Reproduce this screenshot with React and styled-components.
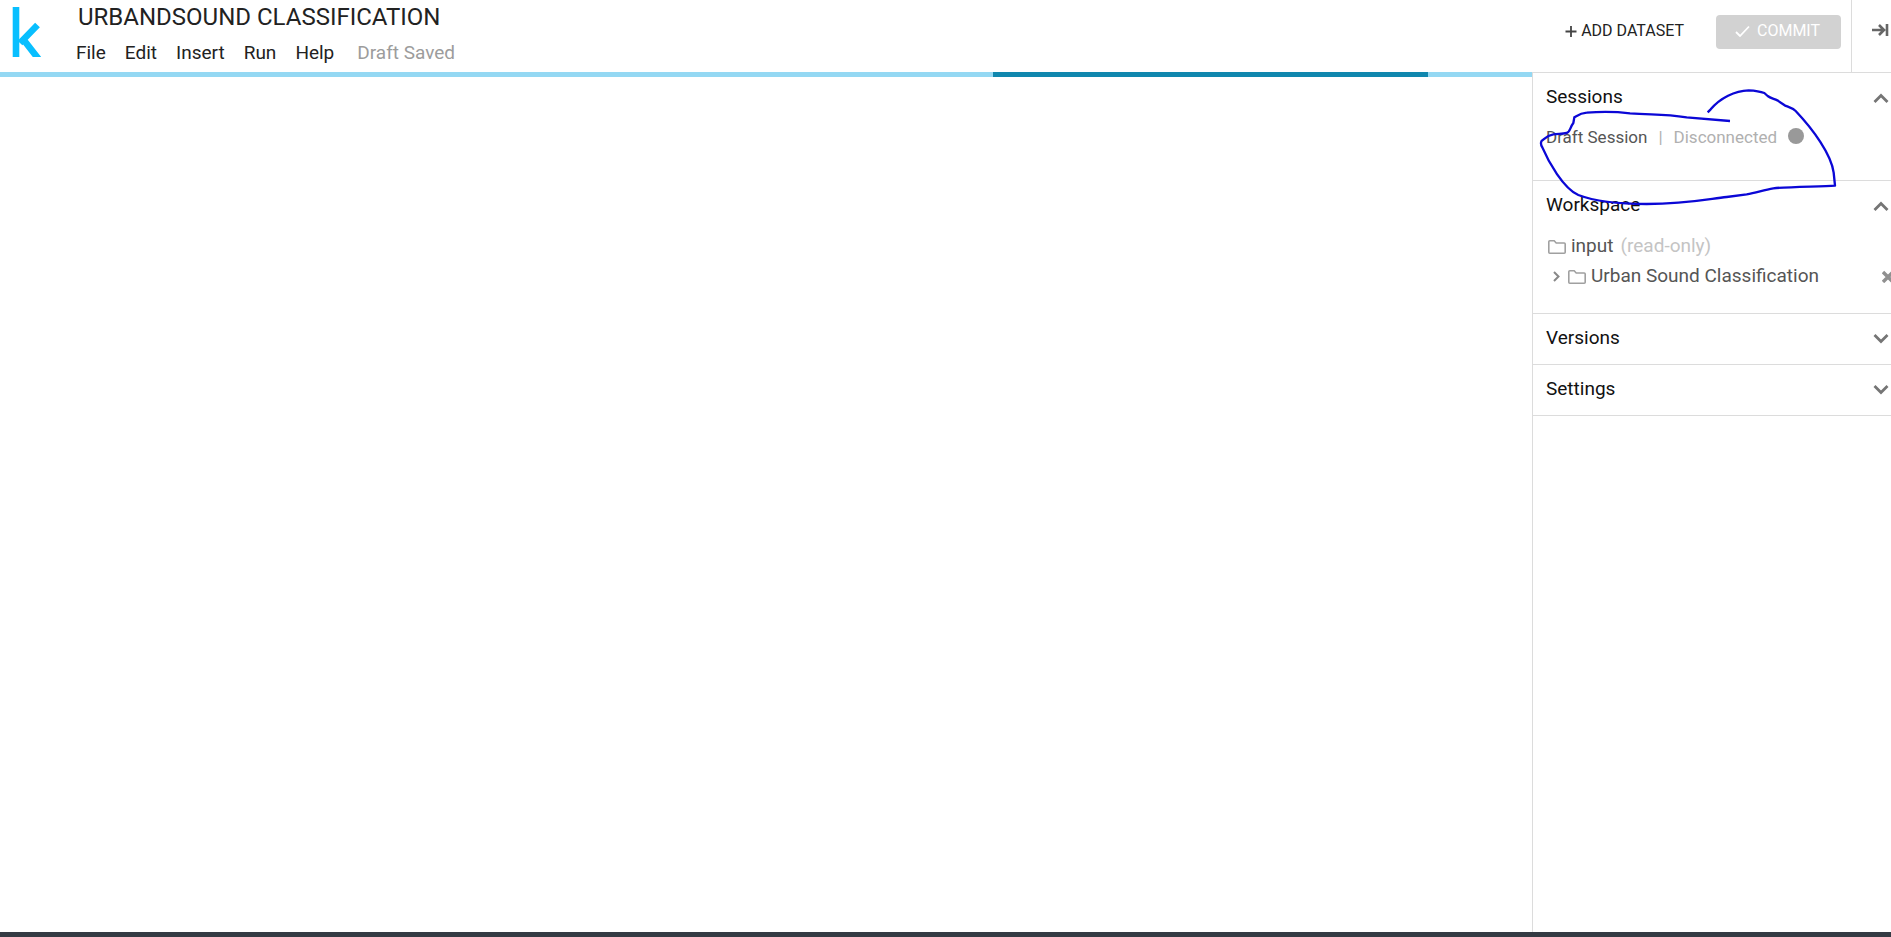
import React from "react";
import styled, { createGlobalStyle } from "styled-components";

const GlobalStyle = createGlobalStyle`
  * {
    box-sizing: border-box;
  }
  body {
    margin: 0;
    background: #fff;
    color: #222;
    font-family: Roboto, "Liberation Sans", Arial, sans-serif;
    font-size: 19px;
    line-height: 24px;
  }
  button {
    margin: 0;
    padding: 0;
    border: 0;
    background: none;
    color: inherit;
    font: inherit;
    text-align: left;
    cursor: pointer;
  }
  h1, h2, ul {
    margin: 0;
    padding: 0;
    font: inherit;
    list-style: none;
  }
`;
const Page = styled.div`
  display: flex;
  flex-direction: column;
  min-height: 100vh;
  border-bottom: 5px solid #343a43;
  overflow: hidden;
`;
const Header = styled.header`
  display: flex;
  height: 72px;
`;
const LogoLink = styled.a`
  width: 76px;
  padding: 7px 0 0 12px;
`;
const TitleWrapper = styled.div`
  flex: 1;
`;
const Title = styled.h1`
  padding: 3px 2px 0;
  font-size: 24px;
  line-height: 28px;
`;
const Menu = styled.nav`
  display: flex;
  gap: 19px;
  padding-top: 10px;
`;
const DraftStatus = styled.span`
  margin-left: 4px;
  color: #9c9c9c;
`;
const Actions = styled.div`
  display: flex;
  align-items: flex-start;
  gap: 32px;
  padding: 15px 10px 0 0;
`;
const AddButton = styled.button`
  display: flex;
  align-items: center;
  gap: 4px;
  height: 32px;
  font-size: 16px;
`;
const CommitButton = styled.button`
  display: flex;
  align-items: center;
  justify-content: center;
  gap: 7px;
  width: 125px;
  height: 34px;
  padding: 0 2px 2px 0;
  border-radius: 4px;
  background: #d2d2d2;
  color: #fff;
  font-size: 16px;
`;
const CollapseButton = styled.button`
  width: 40px;
  padding: 0 0 10px 20px;
  border-left: 1px solid #dcdcdc;
  color: #666;
`;
const Body = styled.div`
  display: flex;
  flex: 1;
`;
const Editor = styled.main`
  flex: 1;
`;
const ProgressTrack = styled.div`
  height: 5px;
  background: #94d8f3;
`;
const ProgressBar = styled.div`
  width: 28.4%;
  height: 5px;
  margin-left: 64.8%;
  background: #1087ae;
`;
const Sidebar = styled.aside`
  position: relative;
  width: 359px;
  border-top: 1px solid #dcdcdc;
  border-left: 1px solid #dcdcdc;
`;
const Section = styled.section`
  padding: 12px 0 ${(props) => (props.$open ? "22px" : "14px")} 13px;
  border-bottom: 1px solid #dcdcdc;
`;
const SectionToggle = styled.button`
  display: flex;
  align-items: center;
  justify-content: space-between;
  width: 100%;
  color: #111;
  padding-right: 2px;
`;
const Session = styled.div`
  display: flex;
  align-items: center;
  gap: 11px;
  padding: 16px 0 9px;
  color: #555;
  font-size: 17px;
`;
const Muted = styled.span`
  color: #b0b0b0;
`;
const Dot = styled.span`
  width: 16px;
  height: 16px;
  margin-bottom: 3px;
  border-radius: 50%;
  background: #999;
`;
const Files = styled.ul`
  padding-top: 14px;
`;
const FileRow = styled.li`
  display: flex;
  align-items: center;
  gap: 5px;
  height: 30px;
  padding-left: ${(props) => (props.$nested ? "6px" : "2px")};
  color: #555;
`;
const ReadOnly = styled.span`
  margin-left: 2px;
  color: #c4c4c4;
`;
const RowButton = styled.button`
  display: flex;
  align-items: center;
  gap: 5px;
`;
const RemoveButton = styled.button`
  display: flex;
  margin: 0 -3px 0 auto;
`;
const Ink = styled.svg`
  position: absolute;
  top: 0;
  left: 0;
  pointer-events: none;
`;

const Chevron = ({ open }) => (
  <svg width="16" height="12" viewBox="0 -1 16 12" fill="none" stroke="#757575" strokeWidth="2.8">
    <path d={open ? "M1.5 10 8 3.5l6.5 6.5" : "M1.5 2 8 8.5l6.500-6.5"} />
  </svg>
);
const Folder = () => (
  <svg width="18" height="16" viewBox="0 -2 18 16" fill="none" stroke="#a0a0a0" strokeWidth="1.6">
    <path d="M.8 12.2V1.8q0-1 1-1h4.4l2 2.2h8q1 0 1 1v8.2q0 1-1 1H1.8q-1 0-1-1z" />
  </svg>
);

const MENU = ["File", "Edit", "Insert", "Run", "Help"];

const Panel = ({ title, children }) => (
  <Section $open={!!children}>
    <h2>
      <SectionToggle aria-expanded={!!children}>
        {title}
        <Chevron open={!!children} />
      </SectionToggle>
    </h2>
    {children}
  </Section>
);

const App = () => {
  return (
    <Page>
      <GlobalStyle />
      <Header>
        <LogoLink href="#" aria-label="Home">
          <svg width="29" height="50" viewBox="0 0 29 50" fill="none" stroke="#08bfff" strokeWidth="6.6">
            <path d="M4 0v50" />
            <path d="M25.5 18 8 36M11 32l15.5 20" />
          </svg>
        </LogoLink>
        <TitleWrapper>
          <Title>URBANDSOUND CLASSIFICATION</Title>
          <Menu>
            {MENU.map((item) => (
              <button key={item}>{item}</button>
            ))}
            <DraftStatus>Draft Saved</DraftStatus>
          </Menu>
        </TitleWrapper>
        <Actions>
          <AddButton>
            <svg width="12" height="12" viewBox="0 0 12 12" stroke="#444" strokeWidth="1.8">
              <path d="M6 1v11M.5 6.5h11" />
            </svg>
            ADD DATASET
          </AddButton>
          <CommitButton disabled>
            <svg width="15" height="12" viewBox="0 0 15 12" fill="none" stroke="#fff" strokeWidth="1.8">
              <path d="m1 7 4 4L14 1.5" />
            </svg>
            COMMIT
          </CommitButton>
        </Actions>
        <CollapseButton aria-label="Collapse sidebar">
          <svg width="18" height="14" viewBox="0 0 18 14" fill="none" stroke="currentColor" strokeWidth="2.6">
            <path d="M0 7h12M7 2l5 5-5 5M15 1v12" />
          </svg>
        </CollapseButton>
      </Header>
      <Body>
        <Editor>
          <ProgressTrack role="progressbar" aria-label="Loading">
            <ProgressBar />
          </ProgressTrack>
        </Editor>
        <Sidebar>
          <Panel title="Sessions">
            <Session>
              Draft Session <Muted>|</Muted> <Muted>Disconnected</Muted>
              <Dot />
            </Session>
          </Panel>
          <Panel title="Workspace">
            <Files>
              <FileRow>
                <Folder />
                input <ReadOnly>(read-only)</ReadOnly>
              </FileRow>
              <FileRow $nested>
                <RowButton>
                  <svg width="11" height="12" viewBox="0 -1 11 12" fill="none" stroke="#888" strokeWidth="2">
                    <path d="m2 1 4.5 4.5L2 10" />
                  </svg>
                  <Folder />
                  Urban Sound Classification
                </RowButton>
                <RemoveButton aria-label="Remove">
                  <svg width="12" height="14" viewBox="0 -2 12 14" stroke="#909090" strokeWidth="3.4">
                    <path d="m1 1 10 10M11 1 1 11" />
                  </svg>
                </RemoveButton>
              </FileRow>
            </Files>
          </Panel>
          <Panel title="Versions" />
          <Panel title="Settings" />
          <Ink width="350" height="140" viewBox="39 9 1050 420" fill="none" stroke="#0b07d6" strokeWidth="7" strokeLinejoin="round">
            <path d="M563 127l9-9c28-34 73-56 114-57 19 1 34 3 47 8l10 9c8 6 18 8 29 13l22 15c12 5 22 7 33 17 52 55 107 130 114 185l4 39c-45 3-145 3-185 8-30 5-50 13-80 18l-60 8c-60 7-120 21-240 21-80 0-150-6-205-27-45-20-90-100-108-143-6-10-5-18 0-21 7-5 13-14 33-18 16-2 26-1 40-4 10-2 10-17 20-30l3-17c10-6 18-13 37-14 50-4 80-4 130 2 70 5 100 1 170 12l130 11" />
          </Ink>
        </Sidebar>
      </Body>
    </Page>
  );
};
export default App;
